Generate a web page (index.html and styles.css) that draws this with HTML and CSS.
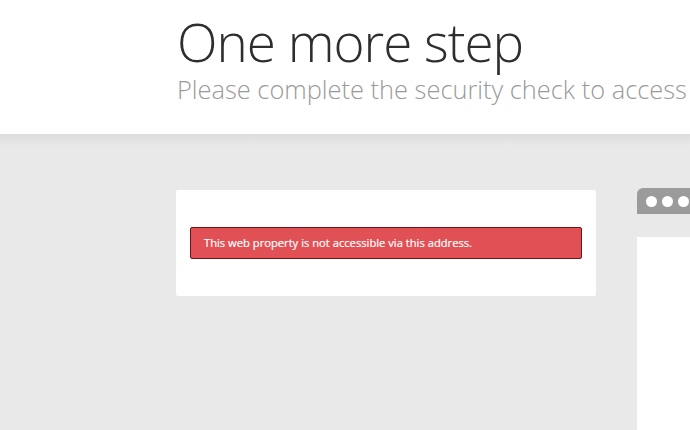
FILE: index.html
```html
<!DOCTYPE html>
<html>
<head>
<meta charset="utf-8">
<link rel="stylesheet" href="styles.css">
</head>
<body>
<header class="header">
  <h1 class="title">One more step</h1>
  <h2 class="subtitle">Please complete the security check to access</h2>
</header>
<main class="main">
  <section class="card">
    <div class="alert">This web property is not accessible via this address.</div>
  </section>
  <aside class="browser">
    <div class="browser-bar">
      <span class="dot"></span><span class="dot"></span><span class="dot"></span>
    </div>
    <div class="browser-page"></div>
  </aside>
</main>
</body>
</html>
```
FILE: styles.css
```css
html, body {
  margin: 0;
  padding: 0;
  height: 100%;
  overflow: hidden;
}
body {
  background: #e9e9e9;
  font-family: "Open Sans", "Noto Sans", sans-serif;
}
.header {
  background: #fff;
  height: 134px;
  padding-left: 177px;
  box-sizing: border-box;
  overflow: hidden;
  white-space: nowrap;
}
.title {
  margin: 0;
  padding-top: 12px;
  font-weight: 300;
  font-size: 53px;
  line-height: 60px;
  color: #2e2e2e;
  letter-spacing: -1px;
}
.subtitle {
  margin: 0;
  font-weight: 300;
  font-size: 25.4px;
  line-height: 34px;
  color: #9a9a9a;
}
.main {
  display: flex;
  align-items: flex-start;
  padding-left: 176px;
  padding-top: 56px;
  gap: 41px;
  height: calc(100% - 134px);
  box-sizing: border-box;
  overflow: hidden;
  background: linear-gradient(#dcdcdc, #e9e9e9 12px);
}
.card {
  flex: none;
  width: 420px;
  height: 106px;
  background: #fff;
  border-radius: 2px;
  padding: 37px 14px;
  box-sizing: border-box;
}
.alert {
  height: 32px;
  box-sizing: border-box;
  background: #e05055;
  border: 1px solid #6e1418;
  border-radius: 2px;
  color: #fff;
  font-size: 11.2px;
  line-height: 30px;
  padding-left: 13px;
  -webkit-text-stroke: 0.2px #fff;
}
.browser {
  flex: none;
  width: 400px;
  margin-top: -2px;
}
.browser-bar {
  height: 26px;
  background: #9b9b9b;
  border-radius: 6px 6px 0 0;
  display: flex;
  align-items: center;
  gap: 5px;
  padding-left: 9px;
}
.dot {
  width: 11px;
  height: 11px;
  border-radius: 50%;
  background: #fff;
}
.browser-page {
  margin-top: 23px;
  height: 300px;
  background: #fff;
}
```
